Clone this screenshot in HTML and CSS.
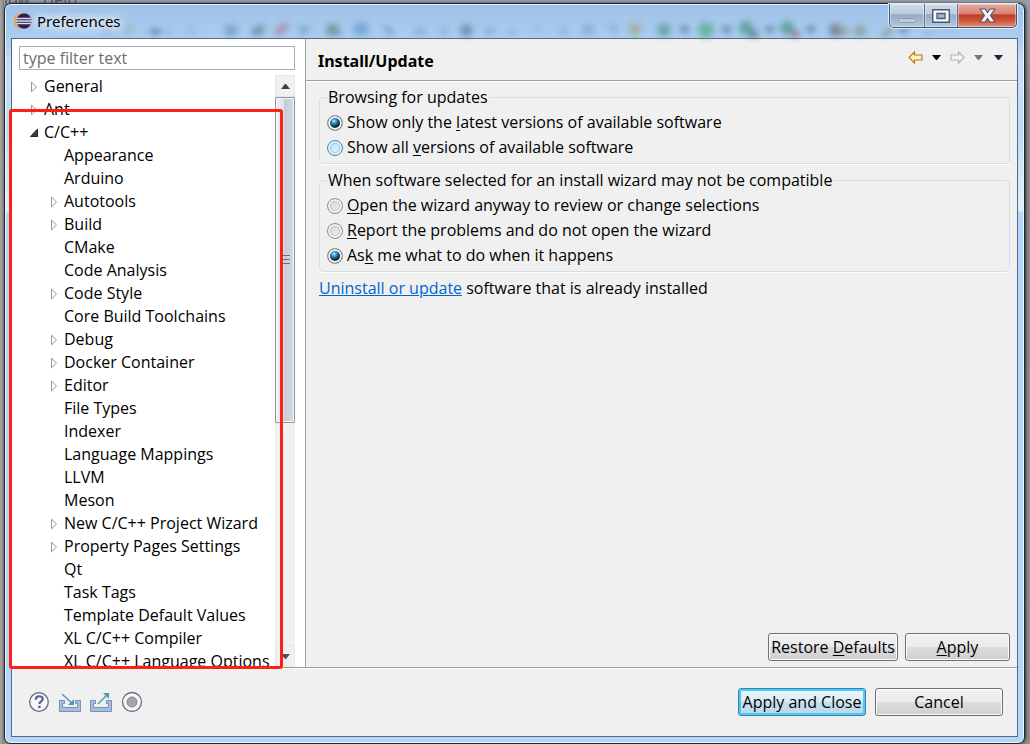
FILE: index.html
```html
<!DOCTYPE html>
<html lang="en">
<head>
<meta charset="utf-8">
<title>Preferences</title>
<link rel="stylesheet" href="styles.css">
</head>
<body>
<svg class="defs" aria-hidden="true">
  <symbol id="closed" viewBox="0 0 8 12"><path d="M1.500 1.200v9.600l5-4.800z" fill="#fff" stroke="#969696"/></symbol>
  <symbol id="open" viewBox="0 0 8 12"><path d="M7.500 2v7.500H.5z" fill="#404040" stroke="#262626"/></symbol>
  <symbol id="caret" viewBox="0 0 9 5"><path d="M0 0h9L5 5H4z"/></symbol>
</svg>
<div class="behind" aria-hidden="true">low&nbsp;&nbsp; Help</div>
<main class="window">
  <header class="titlebar">
    <svg class="ghost" width="870" height="26" aria-hidden="true">
      <g opacity=".65">
        <path d="M5 8h12v10H5zM47 12h8v4h-8zM66 9h10v9H66zM90 9h10v9H90z" fill="#9bb9dc"/>
        <path d="M28 8h10v9H28z" fill="#94b5b7"/><path d="M55 12h9v5h-9z" fill="#344d70"/>
        <path d="M129 8h12v11h-12z" fill="#668fc1"/><path d="M156 12l13-5-3 11h-10z" fill="#4e7076"/>
        <path d="M179 15l9-9 6 4-8 5-5 5z" fill="#b4567c"/><path d="M204 7l12 6-12 6z" fill="#619a9e"/>
        <path d="M230 9l10-3 6 12h-15z" fill="#607875"/><path d="M258 6h14v12h-14z" fill="#6291cb"/>
        <path d="M286 7l10 6v7z" fill="#386fa8"/>
        <path d="M318 10h12v8h-12zM344 10h8v8h-8zM387 10h12v6l-8 4zM412 9l10 9h-9zM434 11h12v5zM459 16l12-8v10z" fill="#83a6cd"/>
        <path d="M365 8h11v11h-11z" fill="#58758f"/><path d="M486 8h12v9h-12zM510 8h11v11z" fill="#7d9fc4"/>
        <path d="M532 7h15l-6 12h-5z" fill="#a7a16f"/>
        <circle cx="568" cy="13" r="7" fill="#4d9382"/><path d="M583 10h11l-5 7z" fill="#274665"/>
        <circle cx="610" cy="13" r="8" fill="#4da57e"/><path d="M625 10h11l-5 7z" fill="#274665"/>
        <circle cx="650" cy="11" r="7" fill="#3e9176"/><path d="M653 14h9v6h-9z" fill="#414e56"/><path d="M668 10h11l-5 7z" fill="#274665"/>
        <circle cx="691" cy="11" r="7" fill="#3e9176"/><path d="M695 14h8v6h-8z" fill="#a73d57"/><path d="M709 10h11l-5 7z" fill="#274665"/>
        <path d="M734 7h10v12h-10z" fill="#655f65"/><path d="M744 10h8v8h-8zM758 9h12v10h-12zM784 17l12-9v8l-7 5z" fill="#87907b"/>
        <path d="M802 10h11l-5 7z" fill="#274665"/><path d="M828 14h10v4h-10zM850 10h8l-4 6z" fill="#8ba6bf"/>
      </g>
    </svg>
    <svg class="logo" width="18" height="18" viewBox="0 0 18 18" aria-hidden="true">
      <circle cx="8" cy="9" r="8" fill="#f08f24"/><circle cx="9.600" cy="9" r="8.200" fill="#f8dcae"/><circle cx="10" cy="9" r="7.700" fill="#2c2255"/>
      <path d="M3 6.500h14M2 9h16M3 11.500h14" stroke="#d9dced" stroke-width="1.300"/>
    </svg>
    <h1 class="caption">Preferences</h1>
    <div class="controls">
      <button class="control" aria-label="Minimize"><svg width="18" height="6"><rect x=".5" y=".5" width="17" height="4" rx="1" fill="#bfcbd8" stroke="#8b9cae"/></svg></button>
      <button class="control control-max" aria-label="Maximize"><svg width="18" height="14"><path d="M.7.7h16.600v12.600H.7z" fill="#f5f7fa" stroke="#4e596e" stroke-width="1.400"/><path d="M5 4.500h8v5H5z" fill="#9db6d0" stroke="#4e596e" stroke-width="1.300"/></svg></button>
      <button class="control control-close" aria-label="Close"><svg width="17" height="15" viewBox="0 0 17 15"><path d="M1 1h5l2.500 3.500L11 1h5l-4.500 6.500L16 14h-5l-2.500-3.500L6 14H1l4.500-6.500z" fill="#f5f5f8" stroke="#50566b" stroke-width="1.200" stroke-linejoin="round"/></svg></button>
    </div>
  </header>

  <div class="client">
    <div class="split">
      <nav class="sidebar" aria-label="Preference pages">
        <input class="filter" type="text" placeholder="type filter text" aria-label="type filter text">
        <div class="tree-area">
          <ul class="tree">
            <li class="item"><svg class="twist"><use href="#closed"/></svg>General</li>
            <li class="item"><svg class="twist"><use href="#closed"/></svg>Ant</li>
            <li class="item"><svg class="twist"><use href="#open"/></svg>C/C++</li>
            <li>
              <ul class="subtree">
                <li class="item leaf">Appearance</li>
                <li class="item leaf">Arduino</li>
                <li class="item"><svg class="twist"><use href="#closed"/></svg>Autotools</li>
                <li class="item"><svg class="twist"><use href="#closed"/></svg>Build</li>
                <li class="item leaf">CMake</li>
                <li class="item leaf">Code Analysis</li>
                <li class="item"><svg class="twist"><use href="#closed"/></svg>Code Style</li>
                <li class="item leaf">Core Build Toolchains</li>
                <li class="item"><svg class="twist"><use href="#closed"/></svg>Debug</li>
                <li class="item"><svg class="twist"><use href="#closed"/></svg>Docker Container</li>
                <li class="item"><svg class="twist"><use href="#closed"/></svg>Editor</li>
                <li class="item leaf">File Types</li>
                <li class="item leaf">Indexer</li>
                <li class="item leaf">Language Mappings</li>
                <li class="item leaf">LLVM</li>
                <li class="item leaf">Meson</li>
                <li class="item"><svg class="twist"><use href="#closed"/></svg>New C/C++ Project Wizard</li>
                <li class="item"><svg class="twist"><use href="#closed"/></svg>Property Pages Settings</li>
                <li class="item leaf">Qt</li>
                <li class="item leaf">Task Tags</li>
                <li class="item leaf">Template Default Values</li>
                <li class="item leaf">XL C/C++ Compiler</li>
                <li class="item leaf">XL C/C++ Language Options</li>
              </ul>
            </li>
          </ul>
          <div class="scrollbar" aria-hidden="true">
            <span class="step"><svg width="9" height="5"><path d="M4 0h1l4 5H0z" fill="#404040"/></svg></span>
            <span class="thumb"><svg width="9" height="9"><path d="M0 .5h9M0 4.500h9M0 8.500h9" stroke="#66717c"/></svg></span>
            <span class="step step-down"><svg width="9" height="5" fill="#505050"><use href="#caret"/></svg></span>
          </div>
        </div>
      </nav>

      <section class="page">
        <header class="page-head">
          <h2 class="page-title">Install/Update</h2>
          <div class="history">
            <button class="tool" aria-label="Back"><svg width="15" height="13"><path d="M1 6.500L6.500 1v3H14v5H6.500v3z" fill="#fff3bd" stroke="#bd7b16" stroke-width="1.200"/></svg></button>
            <button class="tool" aria-label="Back history"><svg width="9" height="5"><use href="#caret"/></svg></button>
            <button class="tool" aria-label="Forward"><svg width="15" height="13"><path d="M14 6.500L8.500 1v3H1v5h7.500v3z" fill="#f6f6f6" stroke="#b3b3b3" stroke-width="1.200"/></svg></button>
            <button class="tool" aria-label="Forward history"><svg width="9" height="5" fill="#777"><use href="#caret"/></svg></button>
            <button class="tool tool-menu" aria-label="Menu"><svg width="9" height="5" fill="#2b1c3e"><use href="#caret"/></svg></button>
          </div>
        </header>
        <form class="page-body">
          <fieldset class="group">
            <legend>Browsing for updates</legend>
            <label class="choice"><input type="radio" name="versions" checked><span>Show only the <u>l</u>atest versions of available software</span></label>
            <label class="choice"><input class="hot" type="radio" name="versions"><span>Show all <u>v</u>ersions of available software</span></label>
          </fieldset>
          <fieldset class="group">
            <legend>When software selected for an install wizard may not be compatible</legend>
            <label class="choice"><input type="radio" name="wizard"><span><u>O</u>pen the wizard anyway to review or change selections</span></label>
            <label class="choice"><input type="radio" name="wizard"><span><u>R</u>eport the problems and do not open the wizard</span></label>
            <label class="choice"><input type="radio" name="wizard" checked><span>As<u>k</u> me what to do when it happens</span></label>
          </fieldset>
          <p class="note"><a href="#">Uninstall or update</a> software that is already installed</p>
          <div class="page-actions">
            <button class="button button-wide" type="button">Restore <u>D</u>efaults</button>
            <button class="button button-apply" type="button"><u>A</u>pply</button>
          </div>
        </form>
      </section>
    </div>

    <footer class="footer">
      <div class="footer-tools">
        <button class="tool" aria-label="Help"><svg width="22" height="22"><circle cx="11" cy="11" r="9.300" fill="#f8f8f8" stroke="#5d6b86" stroke-width="1.300"/><path d="M7.700 8.700c0-4.500 7-4.500 7-.6 0 2.400-3.300 2.300-3.300 5" fill="none" stroke="#536688" stroke-width="2.200"/><path d="M10.200 14.700h2.400v2.400h-2.400z" fill="#536688"/></svg></button>
        <button class="tool" aria-label="Import"><svg width="22" height="22"><path d="M.5 9.500h5v3h-2v4h15v-4h-2v-3h5v11H.5z" fill="#a9bddc" stroke="#7590bd"/><path d="M3 3l11 10" stroke="#5299b8" stroke-width="1.500"/><path d="M15 8v6H9z" fill="#5299b8"/></svg></button>
        <button class="tool" aria-label="Export"><svg width="22" height="22"><path d="M.5 9.500h5v3h-2v4h15v-4h-2v-3h5v11H.5z" fill="#a9bddc" stroke="#7590bd"/><path d="M8 13l10-10" stroke="#5299b8" stroke-width="1.500"/><path d="M13 2h6v6z" fill="#5299b8"/></svg></button>
        <button class="tool" aria-label="Record"><svg width="22" height="22"><circle cx="11" cy="11" r="9.500" fill="#f8f8f8" stroke="#65718a" stroke-width="1.300"/><circle cx="11" cy="11" r="5" fill="#a5a5a5" stroke="#858585"/></svg></button>
      </div>
      <div class="footer-actions">
        <button class="button button-default" type="button">Apply and Close</button>
        <button class="button button-cancel" type="button">Cancel</button>
      </div>
    </footer>
  </div>
</main>
<div class="highlight" aria-hidden="true"></div>
</body>
</html>
```
FILE: styles.css
```css
* {
  box-sizing: border-box;
}

body {
  margin: 0;
  height: 100vh;
  padding: 3px 5px 0 4px;
  overflow: hidden;
  background:
    linear-gradient(90deg, #a9a6a4, #85827f 4px, transparent 4px),
    linear-gradient(#9a9daa, #8b8987 100px, #918e8b);
  font: 16px/23px "Open Sans", "Noto Sans", sans-serif;
  color: #000;
}

.defs {
  position: absolute;
  width: 0;
  height: 0;
}

.behind {
  position: absolute;
  top: -11px;
  left: 4px;
  font-size: 16px;
  line-height: 20px;
  color: #53545f;
}

h1,
h2,
p,
ul,
fieldset {
  margin: 0;
  padding: 0;
}

ul {
  list-style: none;
}

button {
  font: inherit;
  color: inherit;
  padding: 0;
}

svg {
  display: block;
}

u {
  text-underline-offset: 2px;
}

.window {
  position: relative;
  display: flex;
  flex-direction: column;
  height: 100%;
  padding: 0 7px 6px;
  border: 1px solid #1d2733;
  border-radius: 7px;
  box-shadow: inset 0 0 0 1px #eaf5ff, 1px 0 3px #333;
  background: linear-gradient(#a0c2e8, #aacdf0 34px, #c5dff8 60px, #bcdcf8 130px, #e1effb 207px, #b5d6fb 208px);
}

.titlebar {
  position: relative;
  display: flex;
  align-items: center;
  height: 34px;
  flex: none;
}

.ghost {
  position: absolute;
  left: 84px;
  top: 13px;
  max-width: calc(100% - 84px);
  filter: blur(3px);
}

.logo {
  position: relative;
  margin: 0 5px 0 2px;
}

.caption {
  position: relative;
  font-family: "Noto Sans", "Open Sans", sans-serif;
  font-size: 15px;
  font-weight: 400;
  line-height: 22px;
  text-shadow: 0 0 8px #fff, 0 0 10px #fff, 0 0 14px #fff;
}

.controls {
  position: relative;
  align-self: flex-start;
  display: flex;
  height: 24px;
  margin-left: auto;
  border: 1px solid #44546a;
  border-top: 0;
  border-radius: 0 0 5px 5px;
  box-shadow: 0 0 0 1px #dcecfb;
  overflow: hidden;
}

.control {
  display: grid;
  place-items: center;
  width: 35px;
  border: 0;
  border-right: 1px solid #5f7085;
  background: linear-gradient(#d0dce9, #bacbdd 45%, #93abc6 46%, #b2c9e1);
  box-shadow: inset 0 0 0 1px rgba(255, 255, 255, .4);
}

.control:first-child {
  padding-top: 10px;
}

.control-max {
  width: 33px;
}

.control-close {
  width: 58px;
  border-right: 0;
  background: linear-gradient(#e5aaa0, #d6806f 45%, #bd3d27 46%, #cf5038 70%, #dd927c);
}

.client {
  display: flex;
  flex-direction: column;
  flex: 1;
  min-height: 0;
  margin-right: -1px;
  margin-left: -1px;
  border: 1px solid #596a7e;
  background: #f0f0f0;
}

.split {
  display: flex;
  flex: 1;
  min-height: 0;
  border-bottom: 1px solid #a0a0a0;
}

.sidebar {
  display: flex;
  flex-direction: column;
  flex: 0 0 294px;
  padding: 7px 10px 0 7px;
  border-right: 1px solid #a0a0a0;
  background: #fff;
}

.filter {
  width: 100%;
  height: 24px;
  padding: 0 3px;
  border: 1px solid #abadb3;
  background: #fff;
  font: inherit;
}

.filter::placeholder {
  color: #6d6d6d;
  opacity: 1;
}

.tree-area {
  display: flex;
  flex: 1;
  min-height: 0;
  padding-top: 5px;
}

.tree {
  flex: 1;
  min-width: 0;
  overflow: hidden;
  padding-left: 11px;
  white-space: nowrap;
}

.subtree {
  padding-left: 20px;
}

.item {
  display: flex;
  align-items: center;
  height: 23px;
}

.leaf {
  padding-left: 14px;
}

.twist {
  width: 8px;
  height: 12px;
  margin-right: 6px;
}

.scrollbar {
  display: flex;
  flex-direction: column;
  flex: 0 0 20px;
  background: #f0f0f0;
}

.step {
  display: grid;
  place-items: center;
  height: 22px;
  border: 1px solid #e8e8e8;
}

.step-down {
  margin-top: auto;
}

.thumb {
  display: grid;
  place-items: center;
  height: 55%;
  border: 1px solid #8f979f;
  border-radius: 1px;
  box-shadow: inset 0 0 0 1px #f4f6f8;
  background: linear-gradient(90deg, #f0f2f4, #dce1e7 45%, #c5ccd5 46%, #d5dbe2);
}

.page {
  display: flex;
  flex-direction: column;
  flex: 1;
  min-width: 0;
}

.page-head {
  display: flex;
  align-items: center;
  justify-content: space-between;
  height: 42px;
  padding: 3px 14px 0 12px;
  border-bottom: 1px solid #a0a0a0;
  box-shadow: 0 1px #fff;
}

.page-title {
  font-family: "Noto Sans", "Open Sans", sans-serif;
  font-size: 16px;
  font-weight: 700;
}

.history {
  display: flex;
  align-items: center;
  gap: 9px;
  padding-bottom: 8px;
}

.tool {
  border: 0;
  background: none;
}

.tool-menu {
  margin-left: 2px;
}

.page-body {
  display: flex;
  flex-direction: column;
  flex: 1;
  gap: 4px;
  padding: 4px 7px 6px 13px;
}

.group {
  min-width: 0;
  padding: 0 7px 3px;
  border: 1px solid #d5dfe5;
  border-radius: 4px;
  box-shadow: 0 1px #fff;
}

.group legend {
  padding: 0 1px;
  line-height: 25px;
}

.choice {
  display: flex;
  align-items: center;
  gap: 4px;
  height: 25px;
}

.choice input {
  appearance: none;
  width: 16px;
  height: 16px;
  margin: 0;
  border: 1px solid #8e8f8f;
  border-radius: 50%;
  box-shadow: inset 0 0 0 2px #f4f4f4, inset 0 0 0 3px #b9bec4;
  background: linear-gradient(135deg, #cbcfd5, #f7f7f7);
}

.choice .hot {
  border-color: #5586a3;
  box-shadow: inset 0 0 0 2px #def3fd, inset 0 0 0 3px #8fc6e4;
  background: linear-gradient(135deg, #b0dff8, #eef9ff);
}

.choice input:checked {
  background: radial-gradient(circle at 6px 5px, #d5f5ff, #3ba4d3 2px, #12425f 5px, #0b2536 6px);
  box-shadow: inset 0 0 0 2px #f4f4f4;
}

.note {
  line-height: 25px;
}

.note a {
  color: #0066cc;
}

.page-actions {
  display: flex;
  justify-content: flex-end;
  gap: 7px;
  margin-top: auto;
}

.button {
  width: 128px;
  height: 28px;
  border: 1px solid #707070;
  border-radius: 3px;
  box-shadow: inset 0 0 0 1px #fbfbfb;
  background: linear-gradient(#f2f2f2, #ebebeb 49%, #dddddd 50%, #cfcfcf);
  line-height: 24px;
  white-space: nowrap;
}

.button-wide {
  width: 130px;
}

.button-apply {
  width: 105px;
}

.button-default {
  border-color: #3c7fb1;
  box-shadow: inset 0 0 0 2px #46cdf5;
  background: linear-gradient(#eaf5fb, #dcecf5 49%, #c8e0ee 50%, #b9d6e8);
}

.footer {
  display: flex;
  align-items: center;
  justify-content: space-between;
  height: 68px;
  padding: 0 14px 0 16px;
  box-shadow: inset 0 1px #fff;
}

.footer-tools,
.footer-actions {
  display: flex;
  gap: 9px;
}

.highlight {
  position: absolute;
  top: 109px;
  left: 9px;
  width: 274px;
  height: 560px;
  border: 3px solid #ff2015;
  border-radius: 3px;
}
```
